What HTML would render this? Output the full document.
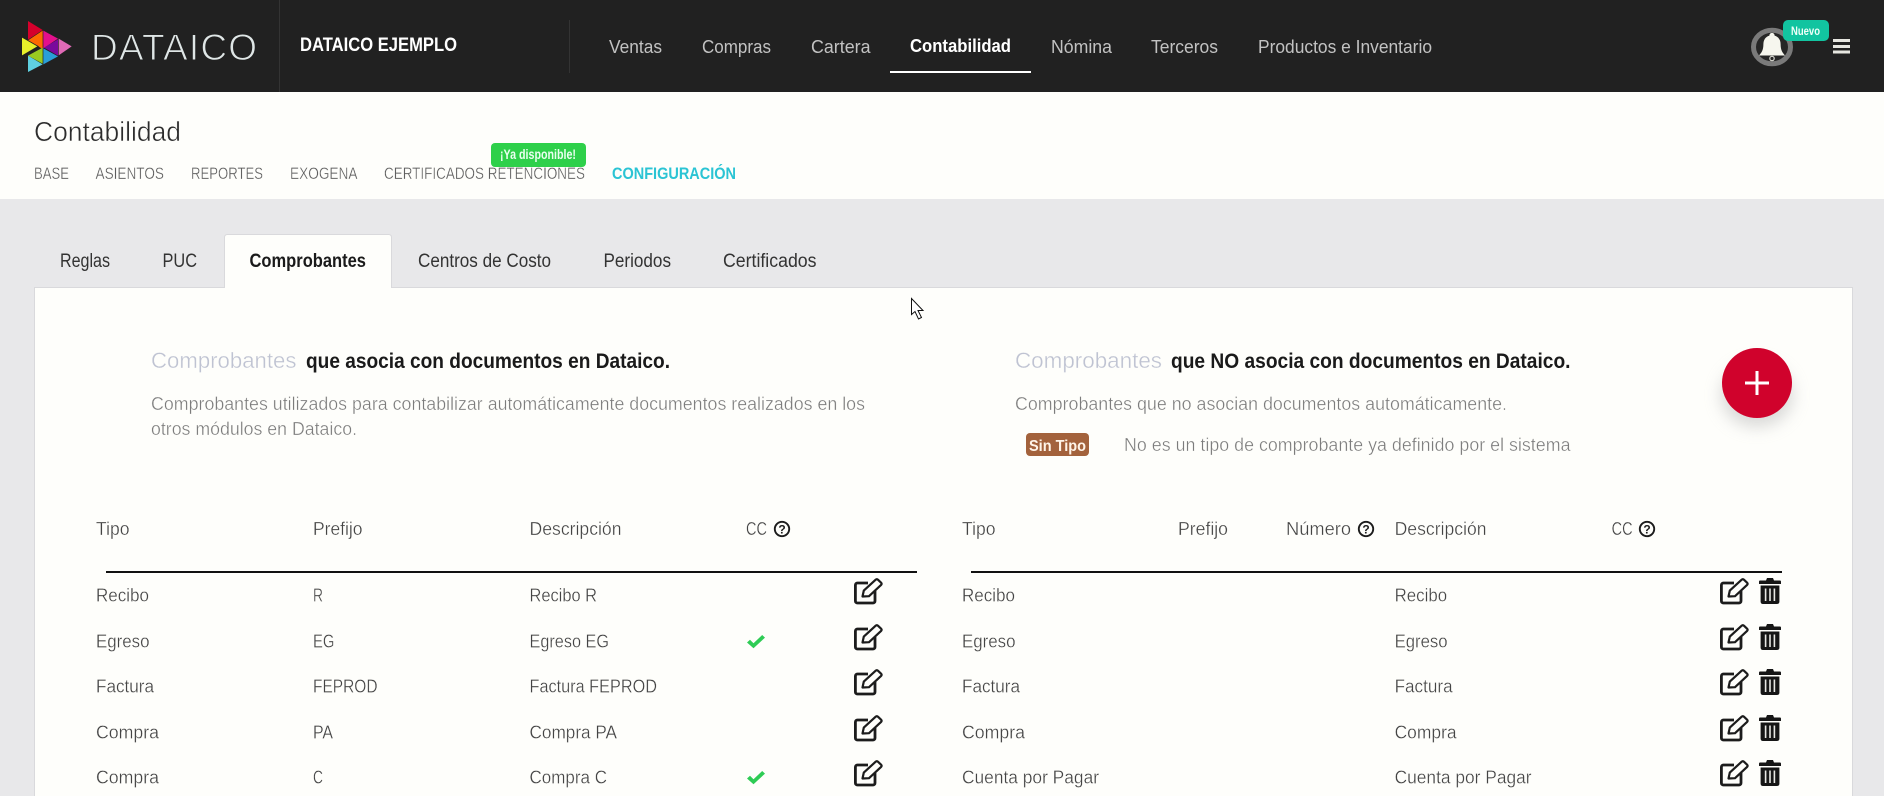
<!DOCTYPE html>
<html lang="es"><head><meta charset="utf-8"><title>Dataico - Contabilidad</title>
<style>
html,body{margin:0;padding:0;width:1884px;height:796px;overflow:hidden;background:#e8e8ea}
svg{display:block}
text{font-family:"Liberation Sans",sans-serif;white-space:pre}
.nav{font-size:18.5px;fill:#c2c2c2}
.sub{font-size:16.5px;fill:#5c5c5c;stroke:#fefefb;stroke-width:.3}
.tab{font-size:19px;fill:#333}
.hl{font-size:22px;fill:#bfc3d2;stroke:#fefefb;stroke-width:.35}
.hb{font-size:21px;fill:#1a1a1a;font-weight:bold}
.p{font-size:18.5px;fill:#7c7c7c;stroke:#fefefb;stroke-width:.35}
.c{font-size:18.5px;fill:#444;stroke:#fefefb;stroke-width:.3}
</style></head><body>
<svg width="1884" height="796" viewBox="0 0 1884 796" xmlns="http://www.w3.org/2000/svg">
<defs>
<g id="ed" fill="none" stroke="#1c1c1c">
<path d="M14 5H3.4A2 2 0 0 0 1.4 7V23A2 2 0 0 0 3.400 25H19A2 2 0 0 0 21 23V13" stroke-width="2.8"/>
<path d="M8.500 18.500L9.800 12.600 21.800 1.600Q22.800 .9 23.800 1.600L27.200 4.800Q28 5.800 27.200 6.800L15 18.200Z" stroke-width="2.200" stroke-linejoin="round"/>
</g>
<g id="tr"><path d="M8 0H14L15 2.500H21Q22 2.500 22 3.500V6H0V3.500Q0 2.500 1 2.500H7Z" fill="#161616"/>
<path d="M1.600 7.500H20.400V23.500Q20.400 26 18 26H4Q1.600 26 1.600 23.500Z" fill="#161616"/>
<path d="M5.800 10.500H7.400V23H5.800ZM10.200 10.500H11.800V23H10.200ZM14.600 10.500H16.200V23H14.600Z" fill="#e8e8e4"/></g>
<g id="q"><circle r="7.200" fill="none" stroke="#1c1c1c" stroke-width="1.900"/>
<text x="0" y="4.400" text-anchor="middle" style="font-size:12px;font-weight:bold;fill:#1c1c1c">?</text></g>
<path id="ck" d="M0 7.500L3 4.800 6.500 8.200 15.200 0 18 2.600 6.500 13.200Z" fill="#2ecc55"/>
<filter id="sh" x="-50%" y="-50%" width="200%" height="200%"><feGaussianBlur stdDeviation="8"/></filter>
</defs>

<rect width="1884" height="796" fill="#e8e8ea"/>
<!-- header -->
<rect width="1884" height="92" fill="#212121"/>
<rect x="279" y="0" width="1" height="92" fill="#333"/>
<rect x="569" y="20" width="1" height="53" fill="#333"/>
<g transform="translate(22,21) scale(.3333)">
<polygon points="18,0 62,27 18,56" fill="#d6002c"/>
<polygon points="62,29 62,84 18,58" fill="#ff6a00"/>
<polygon points="64,29 108,53 64,82" fill="#e3108c"/>
<polygon points="108,55 108,104 66,80" fill="#7a0a9c"/>
<polygon points="110,53 149,76 110,103" fill="#e06ab6"/>
<polygon points="62,80 62,128 18,104" fill="#9acb20"/>
<polygon points="64,82 108,106 64,130" fill="#2a9fd8"/>
<polygon points="18,104 62,130 18,153" fill="#5fd0e0"/>
<polygon points="0,50 46,76 0,103" fill="#e8f02a" stroke="#212121" stroke-width="5" paint-order="stroke"/>
</g>
<text x="91" y="60" textLength="166" lengthAdjust="spacing" style="font-size:37px;fill:#dfe6e6;stroke:#212121;stroke-width:1">DATAICO</text>
<text x="300" y="51" textLength="157" lengthAdjust="spacingAndGlyphs" style="font-size:19px;font-weight:bold;fill:#fff">DATAICO EJEMPLO</text>
<text class="nav" x="609" y="53" textLength="53" lengthAdjust="spacingAndGlyphs">Ventas</text>
<text class="nav" x="702" y="53" textLength="69" lengthAdjust="spacingAndGlyphs">Compras</text>
<text class="nav" x="811" y="53" textLength="59.500" lengthAdjust="spacingAndGlyphs">Cartera</text>
<text class="nav" x="910" y="52" textLength="101" lengthAdjust="spacingAndGlyphs" style="font-weight:bold;fill:#fff">Contabilidad</text>
<rect x="890" y="71" width="141" height="2" fill="#fff"/>
<text class="nav" x="1051" y="53" textLength="61" lengthAdjust="spacingAndGlyphs">Nómina</text>
<text class="nav" x="1151" y="53" textLength="67" lengthAdjust="spacingAndGlyphs">Terceros</text>
<text class="nav" x="1258" y="53" textLength="174" lengthAdjust="spacingAndGlyphs">Productos e Inventario</text>
<ellipse cx="1772" cy="47" rx="18.500" ry="16.800" fill="#262626" stroke="#7a7a7a" stroke-width="5"/>
<path d="M1772 33c-1.600 0-2.600 1-2.600 2.600-4 1.200-6 4.500-6 8.400 0 6.500-2 8.700-4.400 11.500h26c-2.400-2.800-4.400-5-4.400-11.500 0-3.900-2-7.200-6-8.400 0-1.600-1-2.600-2.600-2.600z" fill="#f6f6ee"/>
<circle cx="1772" cy="58.500" r="2.200" fill="none" stroke="#d8d8d0" stroke-width="1.200"/>
<rect x="1783" y="20" width="46" height="21" rx="5" fill="#12c4a0"/>
<text x="1791" y="35" textLength="29" lengthAdjust="spacingAndGlyphs" style="font-size:11.500px;font-weight:bold;fill:#f0fff8">Nuevo</text>
<path d="M1833 39h17v3h-17zM1833 45h17v3h-17zM1833 50.500h17v3h-17z" fill="#e6e6e0"/>

<!-- sub header -->
<rect y="92" width="1884" height="107" fill="#fefefb"/>
<text x="34" y="141" textLength="147" lengthAdjust="spacingAndGlyphs" style="font-size:27.500px;fill:#2c2c2c;stroke:#fefefb;stroke-width:.5">Contabilidad</text>
<text class="sub" x="34" y="179" textLength="35" lengthAdjust="spacingAndGlyphs">BASE</text>
<text class="sub" x="95.500" y="179" textLength="68.500" lengthAdjust="spacingAndGlyphs">ASIENTOS</text>
<text class="sub" x="191" y="179" textLength="72" lengthAdjust="spacingAndGlyphs">REPORTES</text>
<text class="sub" x="290" y="179" textLength="67.500" lengthAdjust="spacingAndGlyphs">EXOGENA</text>
<text class="sub" x="384" y="179" textLength="201" lengthAdjust="spacingAndGlyphs">CERTIFICADOS RETENCIONES</text>
<text x="612" y="179" textLength="124" lengthAdjust="spacingAndGlyphs" style="font-size:16.500px;font-weight:bold;fill:#2bc4d4">CONFIGURACIÓN</text>
<rect x="491" y="143" width="95" height="24" rx="4" fill="#2ed04a"/>
<text x="500" y="159" textLength="76" lengthAdjust="spacingAndGlyphs" style="font-size:13.500px;font-weight:bold;fill:#eafff0">¡Ya disponible!</text>

<!-- panel & tabs -->
<rect x="34.500" y="287.500" width="1818" height="520" fill="#fefefb" stroke="#d9d9dc"/>
<path d="M224.500 287.500V237.500Q224.500 234.500 227.500 234.500H388.500Q391.500 234.500 391.500 237.500V287.500" fill="#fefefb" stroke="#d9d9dc"/>
<rect x="225" y="286" width="166" height="3" fill="#fefefb"/>
<text class="tab" x="60" y="267" textLength="50" lengthAdjust="spacingAndGlyphs">Reglas</text>
<text class="tab" x="162.500" y="267" textLength="34.500" lengthAdjust="spacingAndGlyphs">PUC</text>
<text class="tab" x="249.500" y="267" textLength="116.500" lengthAdjust="spacingAndGlyphs" style="font-weight:bold;fill:#1a1a1a">Comprobantes</text>
<text class="tab" x="418" y="267" textLength="133" lengthAdjust="spacingAndGlyphs">Centros de Costo</text>
<text class="tab" x="603.500" y="267" textLength="67.500" lengthAdjust="spacingAndGlyphs">Periodos</text>
<text class="tab" x="723" y="267" textLength="93.500" lengthAdjust="spacingAndGlyphs">Certificados</text>

<!-- cursor -->
<path d="M911.500 298.500V314.500L915 311.500 918.500 319 921.500 317.500 918 310.500H923Z" fill="#fff" stroke="#111" stroke-width="1"/>

<!-- intro left -->
<text class="hl" x="151" y="368" textLength="145.500" lengthAdjust="spacingAndGlyphs">Comprobantes</text>
<text class="hb" x="306" y="368" textLength="364" lengthAdjust="spacingAndGlyphs">que asocia con documentos en Dataico.</text>
<text class="p" x="151" y="410" textLength="714" lengthAdjust="spacingAndGlyphs">Comprobantes utilizados para contabilizar automáticamente documentos realizados en los</text>
<text class="p" x="151" y="435" textLength="206" lengthAdjust="spacingAndGlyphs">otros módulos en Dataico.</text>

<!-- intro right -->
<text class="hl" x="1015" y="368" textLength="147" lengthAdjust="spacingAndGlyphs">Comprobantes</text>
<text class="hb" x="1171" y="368" textLength="399.500" lengthAdjust="spacingAndGlyphs">que NO asocia con documentos en Dataico.</text>
<text class="p" x="1015" y="410" textLength="492" lengthAdjust="spacingAndGlyphs">Comprobantes que no asocian documentos automáticamente.</text>
<rect x="1026" y="433" width="63" height="23" rx="4" fill="#a3623c"/>
<text x="1029" y="451" textLength="57" lengthAdjust="spacingAndGlyphs" style="font-size:16px;font-weight:bold;fill:#fff4e8">Sin Tipo</text>
<text class="p" x="1124" y="451" textLength="446.500" lengthAdjust="spacingAndGlyphs">No es un tipo de comprobante ya definido por el sistema</text>

<!-- FAB -->
<ellipse cx="1757" cy="395" rx="36" ry="32" fill="#bbb" opacity=".55" filter="url(#sh)"/>
<circle cx="1757" cy="383" r="35" fill="#d0022c"/>
<path d="M1745 381.500h24v3h-24zM1755.500 371h3v24h-3z" fill="#fff"/>

<!-- left table -->
<text class="c" x="96" y="535" textLength="33.500" lengthAdjust="spacingAndGlyphs">Tipo</text>
<text class="c" x="313" y="535" textLength="49.500" lengthAdjust="spacingAndGlyphs">Prefijo</text>
<text class="c" x="529.500" y="535" textLength="92" lengthAdjust="spacingAndGlyphs">Descripción</text>
<text class="c" x="746" y="535" textLength="21" lengthAdjust="spacingAndGlyphs">CC</text>
<use href="#q" x="782" y="529"/>
<rect x="106" y="571" width="811" height="2" fill="#111"/>

<text class="c" x="96" y="601.500" textLength="53" lengthAdjust="spacingAndGlyphs">Recibo</text>
<text class="c" x="313" y="601.500" textLength="10" lengthAdjust="spacingAndGlyphs">R</text>
<text class="c" x="529.500" y="601.500" textLength="67.500" lengthAdjust="spacingAndGlyphs">Recibo R</text>
<use href="#ed" x="854" y="578"/>

<text class="c" x="96" y="647.500" textLength="53.500" lengthAdjust="spacingAndGlyphs">Egreso</text>
<text class="c" x="313" y="647.500" textLength="21.500" lengthAdjust="spacingAndGlyphs">EG</text>
<text class="c" x="529.500" y="647.500" textLength="79.500" lengthAdjust="spacingAndGlyphs">Egreso EG</text>
<use href="#ck" x="747" y="635"/>
<use href="#ed" x="854" y="624"/>

<text class="c" x="96" y="692.500" textLength="58" lengthAdjust="spacingAndGlyphs">Factura</text>
<text class="c" x="313" y="692.500" textLength="64.500" lengthAdjust="spacingAndGlyphs">FEPROD</text>
<text class="c" x="529.500" y="692.500" textLength="127.500" lengthAdjust="spacingAndGlyphs">Factura FEPROD</text>
<use href="#ed" x="854" y="669"/>

<text class="c" x="96" y="738.500" textLength="63" lengthAdjust="spacingAndGlyphs">Compra</text>
<text class="c" x="313" y="738.500" textLength="20" lengthAdjust="spacingAndGlyphs">PA</text>
<text class="c" x="529.500" y="738.500" textLength="87.500" lengthAdjust="spacingAndGlyphs">Compra PA</text>
<use href="#ed" x="854" y="715"/>

<text class="c" x="96" y="783.500" textLength="63" lengthAdjust="spacingAndGlyphs">Compra</text>
<text class="c" x="313" y="783.500" textLength="10" lengthAdjust="spacingAndGlyphs">C</text>
<text class="c" x="529.500" y="783.500" textLength="77.500" lengthAdjust="spacingAndGlyphs">Compra C</text>
<use href="#ck" x="747" y="771"/>
<use href="#ed" x="854" y="760"/>

<!-- right table -->
<text class="c" x="962" y="535" textLength="33.500" lengthAdjust="spacingAndGlyphs">Tipo</text>
<text class="c" x="1178" y="535" textLength="50" lengthAdjust="spacingAndGlyphs">Prefijo</text>
<text class="c" x="1286" y="535" textLength="65" lengthAdjust="spacingAndGlyphs">Número</text>
<use href="#q" x="1366" y="529"/>
<text class="c" x="1394.600" y="535" textLength="92" lengthAdjust="spacingAndGlyphs">Descripción</text>
<text class="c" x="1611.600" y="535" textLength="21" lengthAdjust="spacingAndGlyphs">CC</text>
<use href="#q" x="1647" y="529"/>
<rect x="971" y="571" width="811" height="2" fill="#111"/>

<text class="c" x="962" y="601.500" textLength="53" lengthAdjust="spacingAndGlyphs">Recibo</text>
<text class="c" x="1394.600" y="601.500" textLength="52.500" lengthAdjust="spacingAndGlyphs">Recibo</text>
<use href="#ed" x="1720" y="578"/><use href="#tr" x="1759" y="578"/>

<text class="c" x="962" y="647.500" textLength="53.500" lengthAdjust="spacingAndGlyphs">Egreso</text>
<text class="c" x="1394.600" y="647.500" textLength="53" lengthAdjust="spacingAndGlyphs">Egreso</text>
<use href="#ed" x="1720" y="624"/><use href="#tr" x="1759" y="624"/>

<text class="c" x="962" y="692.500" textLength="58" lengthAdjust="spacingAndGlyphs">Factura</text>
<text class="c" x="1394.600" y="692.500" textLength="58" lengthAdjust="spacingAndGlyphs">Factura</text>
<use href="#ed" x="1720" y="669"/><use href="#tr" x="1759" y="669"/>

<text class="c" x="962" y="738.500" textLength="63" lengthAdjust="spacingAndGlyphs">Compra</text>
<text class="c" x="1394.600" y="738.500" textLength="62" lengthAdjust="spacingAndGlyphs">Compra</text>
<use href="#ed" x="1720" y="715"/><use href="#tr" x="1759" y="715"/>

<text class="c" x="962" y="783.500" textLength="137" lengthAdjust="spacingAndGlyphs">Cuenta por Pagar</text>
<text class="c" x="1394.600" y="783.500" textLength="137" lengthAdjust="spacingAndGlyphs">Cuenta por Pagar</text>
<use href="#ed" x="1720" y="760"/><use href="#tr" x="1759" y="760"/>
</svg>
</body></html>
